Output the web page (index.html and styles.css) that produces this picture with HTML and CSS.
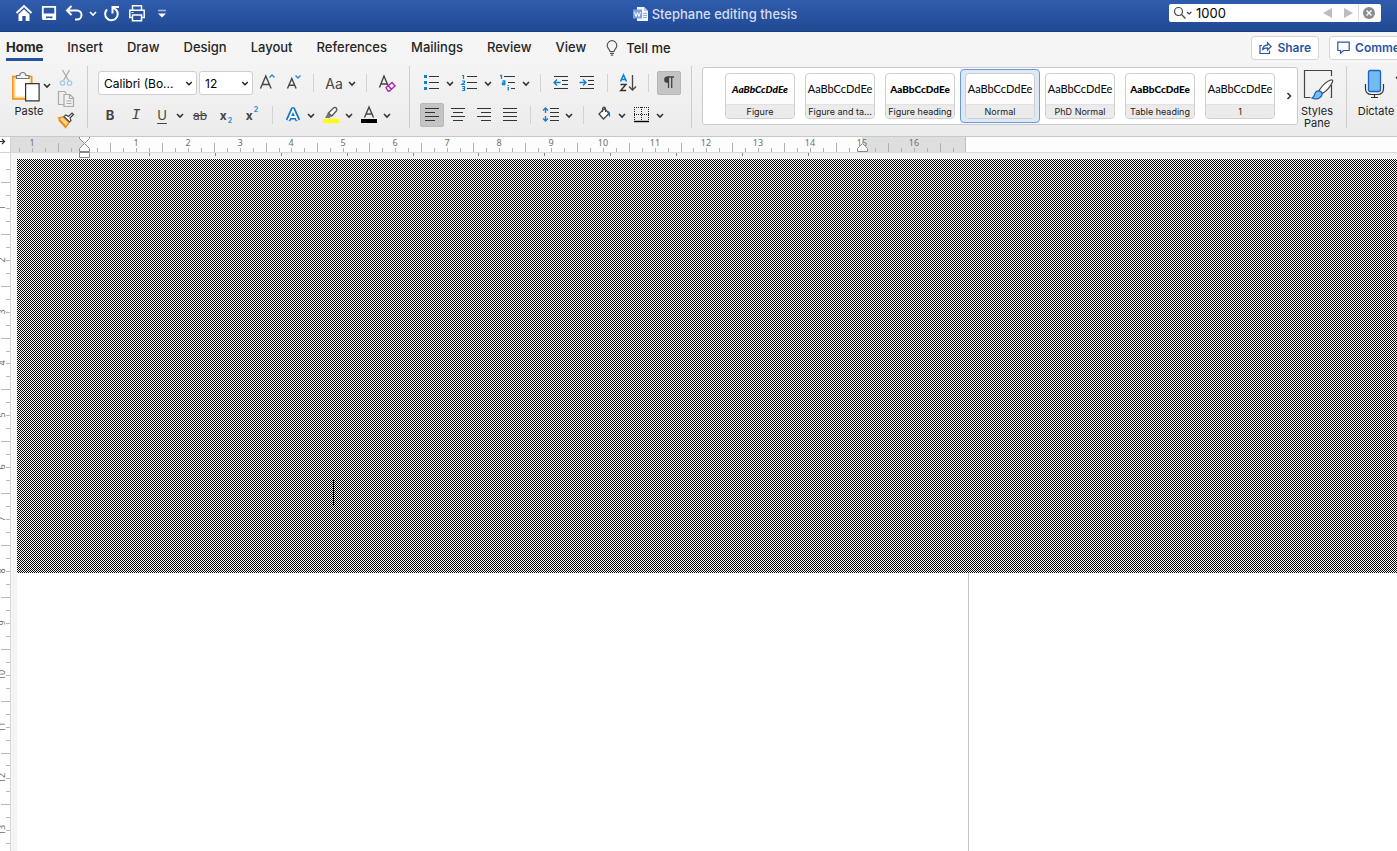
FILE: index.html
```html
<!DOCTYPE html>
<html lang="en">
<head>
<meta charset="utf-8">
<title>Stephane editing thesis</title>
<link rel="stylesheet" href="styles.css">
</head>
<body>
<svg class="defs" aria-hidden="true">
  <symbol id="chev" viewBox="0 0 12 24"><path d="M3 11l3 3 3-3" fill="none" stroke="currentColor" stroke-width="1.6"/></symbol>
</svg>
<div class="window">
  <header class="titlebar">
    <nav class="quick" aria-label="Quick access">
      <button aria-label="Home"><svg width="24" height="24"><path d="M4.500 12L12 5l7.500 7" fill="none" stroke="#fff" stroke-width="2"/><path d="M6.500 13.200L12 8.300l5.500 4.900V20h-3.800v-5h-3.400v5H6.500z" fill="#fff"/></svg></button>
      <button aria-label="Save"><svg width="24" height="24"><path d="M5.800 5.800h12.400v12.400H7.200l-1.400-1.400z" fill="none" stroke="#fff" stroke-width="1.800"/><path d="M5.500 12.500h13V19h-3v-3.500H9V19H5.500z" fill="#fff"/><path d="M11 17h2v2h-2z" fill="#fff"/></svg></button>
      <button aria-label="Undo"><svg width="24" height="24"><path d="M9.500 5L5 9.500l4.500 4.500M5.500 9.500H15a4.300 4.300 0 0 1 0 9h-2" fill="none" stroke="#fff" stroke-width="2"/></svg></button>
      <button class="narrow" aria-label="Undo history"><svg width="12" height="24"><use href="#chev"/></svg></button>
      <button aria-label="Repeat"><svg width="24" height="24"><path d="M7 8.500A6.300 6.300 0 1 0 16.300 9L13 6.500" fill="none" stroke="#fff" stroke-width="2"/><path d="M12.500 12.500V6h6.500" fill="none" stroke="#fff" stroke-width="2"/></svg></button>
      <button aria-label="Print"><svg width="24" height="24" fill="none" stroke="#fff" stroke-width="1.500"><path d="M7.500 9V4.800h9V9M7.500 16.500H4.800V9.200h14.400v7.300h-2.700M7.500 14h9v5.800h-9z"/><path d="M6.500 11.500h2" stroke-width="1"/></svg></button>
      <button aria-label="Customize toolbar"><svg width="24" height="24"><path d="M8 9.500h8" stroke="#a9bce0" stroke-width="1.500"/><path d="M8 12.500h8l-4 4z" fill="#fff"/></svg></button>
    </nav>
    <h1 class="doc-title">
      <svg width="16" height="16"><path d="M4 1h7l4 4v10H4z" fill="#f3f6fc"/><path d="M11 1l4 4h-4z" fill="#b6c8ea"/><path d="M10 7.500h4M10 9.500h4M10 11.500h4" stroke="#8faadd" /><path d="M0 3.500h9v9H0z" fill="#7d9fdf"/><path d="M1.500 6l1.500 4.500L4.500 6.500 6 10.500 7.500 6" fill="none" stroke="#fff"/></svg>
      Stephane editing thesis
    </h1>
    <div class="search-slot">
      <div class="search">
        <svg width="24" height="18"><circle cx="9.500" cy="7.500" r="4" fill="none" stroke="#444" stroke-width="1.200"/><path d="M12.500 10.500l4 4" stroke="#444" stroke-width="1.300"/><path d="M18 8l2.200 2 2.200-2" fill="none" stroke="#444" stroke-width="1.200"/></svg>
        <input type="text" value="1000" aria-label="Search in document">
        <button aria-label="Previous"><svg width="20" height="18"><path d="M14 4v10L5 9z" fill="#bdbdbd"/></svg></button>
        <button aria-label="Next"><svg width="20" height="18"><path d="M6 4v10l9-5z" fill="#bdbdbd"/></svg></button>
        <button class="clear" aria-label="Clear"><svg width="22" height="18"><circle cx="10" cy="9" r="6" fill="#8c8c8c"/><path d="M7.500 6.500l5 5m0-5l-5 5" stroke="#fff" stroke-width="1.400"/></svg></button>
      </div>
    </div>
  </header>

  <nav class="tabs" aria-label="Ribbon tabs">
    <a class="tab current" href="#home">Home</a>
    <a class="tab" href="#insert">Insert</a>
    <a class="tab" href="#draw">Draw</a>
    <a class="tab" href="#design">Design</a>
    <a class="tab" href="#layout">Layout</a>
    <a class="tab" href="#references">References</a>
    <a class="tab" href="#mailings">Mailings</a>
    <a class="tab" href="#review">Review</a>
    <a class="tab" href="#view">View</a>
    <button class="tell"><svg width="12" height="16" fill="none" stroke="#555" stroke-width="1.200"><path d="M4 11.500C4 9.500 1.200 8.500 1.200 5.500a4.800 4.800 0 0 1 9.600 0C10.800 8.500 8 9.500 8 11.500zM4 13.300h4M4.800 15.200h2.400"/></svg>Tell me</button>
    <div class="collab">
      <button class="pill"><svg width="13" height="13" fill="none" stroke="#2a55a5" stroke-width="1.200"><path d="M3 4.500H1v8h9.500V9.500M3.500 9c.4-3 2-4.800 5-4.800V1.800L12.200 5.500 8.500 9V6.800C6 6.800 4.500 7.500 3.500 9z"/></svg>Share</button>
      <button class="pill"><svg width="13" height="13" fill="none" stroke="#2a55a5" stroke-width="1.200"><path d="M.8 1.200h11.400v8.300H6.500L3.500 12.300V9.500H.8z"/></svg>Comments</button>
    </div>
  </nav>

  <section class="ribbon" aria-label="Home tools">
    <div class="group clipboard">
      <button class="paste">
        <svg width="44" height="34"><path d="M2.800 6.500h19v22.500h-19z" fill="#fbd98a" stroke="#f08c17" stroke-width="1.400"/><path d="M5.500 9h14v17.500h-14z" fill="#fff"/><path d="M6.500 8.500v-3h3.300a3 3 0 0 1 6 0h3.200v3z" fill="#f4f4f4" stroke="#777" stroke-width="1.200"/><path d="M15.600 13.600h13.500v17.200H15.600z" fill="#fff" stroke="#333" stroke-width="1.200"/><path d="M34 14l3 3 3-3" fill="none" stroke="#333" stroke-width="1.600"/></svg>
        <span>Paste</span>
      </button>
      <div class="clip-tools">
        <button aria-label="Cut"><svg width="20" height="18" fill="none"><path d="M6.500 1l6 10.500M13.500 1l-6 10.500" stroke="#aaa" stroke-width="1.200"/><circle cx="6.500" cy="14" r="2.200" stroke="#9fcdea" stroke-width="1.300"/><circle cx="13.500" cy="14" r="2.200" stroke="#9fcdea" stroke-width="1.300"/></svg></button>
        <button aria-label="Copy"><svg width="20" height="18" fill="none" stroke="#aaa" stroke-width="1.200"><path d="M8 14.500H2.500V1.500h6l2 2"/><path d="M8 4.500h6l3.500 3.500v8.500H8zM13.500 4.500V8.500h4M10.500 11h5M10.500 13.500h5"/></svg></button>
        <button aria-label="Format painter"><svg width="20" height="18"><path d="M2.500 7l4.500-1 6 5.500-3.500 5z" fill="#fbd98a" stroke="#f08c17" stroke-width="1.400"/><path d="M3 9l6 6" stroke="#f08c17" stroke-width="2"/><path d="M8 5.500l2-1.500 2.500 1.500L16 2l1.500 1.500L14 7l1 2.500-1.500 1.500z" fill="#fff" stroke="#444" stroke-width="1.200"/></svg></button>
      </div>
    </div>

    <div class="group rows">
      <div class="row">
        <label class="combo face"><select aria-label="Font"><option>Calibri (Bo...</option></select><svg width="12" height="22"><use href="#chev"/></svg></label>
        <label class="combo size"><select aria-label="Font size"><option>12</option></select><svg width="12" height="22"><use href="#chev"/></svg></label>
        <button class="tool" aria-label="Increase font size"><svg width="24" height="24" fill="none"><path d="M5.500 17.500L10.800 5l5.300 12.500M7.200 13.500h7.200" stroke="#444" stroke-width="1.400"/><path d="M14.500 6.500L17 4l2.500 2.500" stroke="#1e8fd6" stroke-width="1.400"/></svg></button>
        <button class="tool" aria-label="Decrease font size"><svg width="24" height="24" fill="none"><path d="M6.500 17.500L10.800 7.500l4.300 10M8 14.300h5.700" stroke="#444" stroke-width="1.400"/><path d="M14.500 4.500L17 7l2.500-2.500" stroke="#1e8fd6" stroke-width="1.400"/></svg></button>
        <i class="sep"></i>
        <button class="tool case" aria-label="Change case">Aa</button>
        <button class="drop" aria-label="Case options"><svg width="12" height="24"><use href="#chev"/></svg></button>
        <i class="sep"></i>
        <button class="tool" aria-label="Clear formatting"><svg width="24" height="24" fill="none"><path d="M4.500 16.500L9 5l4 9.500M6 13h6" stroke="#444" stroke-width="1.400"/><path d="M11 16.500l6-5 3 3.500-5.500 5h-1.500zM13.300 14.800l3 3.400" fill="#fff" stroke="#b01fb5" stroke-width="1.400"/></svg></button>
      </div>
      <div class="row">
        <button class="tool bold" aria-label="Bold">B</button>
        <button class="tool ital" aria-label="Italic">I</button>
        <button class="tool under" aria-label="Underline">U</button>
        <button class="drop after" aria-label="Underline options"><svg width="12" height="24"><use href="#chev"/></svg></button>
        <button class="tool strike" aria-label="Strikethrough">ab</button>
        <button class="tool script" aria-label="Subscript">x<sub>2</sub></button>
        <button class="tool script" aria-label="Superscript">x<sup>2</sup></button>
        <i class="sep"></i>
        <button class="tool" aria-label="Text effects"><svg width="24" height="24" fill="none"><path d="M7 17.500L12 6.500l5 11M9 14h6" stroke="#1372c8" stroke-width="4.800" stroke-linejoin="round"/><path d="M7.200 17.500L12 7l4.800 10.500M9 14h6" stroke="#fff" stroke-width="1.800"/></svg></button>
        <button class="drop" aria-label="Text effect options"><svg width="12" height="24"><use href="#chev"/></svg></button>
        <button class="tool" aria-label="Highlight"><svg width="24" height="24"><path d="M4 16h16v4H4z" fill="#ff0"/><path d="M6 15l3-5.500 3.500 3.500L10.500 15z" fill="#777"/><path d="M9.500 10l5-5c2-1.500 4.500.8 3 2.800l-4.700 5.200z" fill="#fff" stroke="#555" stroke-width="1.300"/></svg></button>
        <button class="drop" aria-label="Highlight colors"><svg width="12" height="24"><use href="#chev"/></svg></button>
        <button class="tool" aria-label="Font color"><svg width="24" height="24"><path d="M4 16h16v4H4z"/><path d="M7.500 14.500L12 4l4.500 10.500M9 11h6" fill="none" stroke="#444" stroke-width="1.400"/></svg></button>
        <button class="drop" aria-label="Font colors"><svg width="12" height="24"><use href="#chev"/></svg></button>
      </div>
    </div>

    <div class="group rows">
      <div class="row">
        <button class="tool" aria-label="Bullets"><svg width="24" height="24"><path d="M4 4h3v3H4zM4 10h3v3H4zM4 16h3v3H4z" fill="#1380cc"/><path d="M9 5.500h10M9 11.500h10M9 17.500h10" stroke="#333" stroke-width="1.200"/></svg></button>
        <button class="drop" aria-label="Bullet styles"><svg width="12" height="24"><use href="#chev"/></svg></button>
        <button class="tool" aria-label="Numbering"><svg width="24" height="24"><path d="M4 4.500h1.500V8M4 10h2.500v1.500L4 13.500h3M4 15.500h2.500v4H4m.5-2h2" fill="none" stroke="#1380cc" stroke-width="1.200"/><path d="M9 5.500h10M9 11.500h10M9 17.500h10" stroke="#333" stroke-width="1.200"/></svg></button>
        <button class="drop" aria-label="Numbering styles"><svg width="12" height="24"><use href="#chev"/></svg></button>
        <button class="tool" aria-label="Multilevel list"><svg width="24" height="24"><path d="M4 4.500h1.500V8M6.500 10h2.300v3.500H6.500v-1.700h2.300M12.200 16v3.500M12.200 14v1" fill="none" stroke="#1380cc" stroke-width="1.300"/><path d="M8 5.500h11M12 11.500h7M15 17.500h4" stroke="#333" stroke-width="1.200"/></svg></button>
        <button class="drop" aria-label="Multilevel styles"><svg width="12" height="24"><use href="#chev"/></svg></button>
        <i class="sep"></i>
        <button class="tool" aria-label="Decrease indent"><svg width="24" height="24" fill="none"><path d="M5 5.500h14M13 9.500h6M13 13.500h6M5 17.500h14" stroke="#333" stroke-width="1.200"/><path d="M8 8.500l-3 3 3 3M5 11.500h6.500" stroke="#1380cc" stroke-width="1.400"/></svg></button>
        <button class="tool" aria-label="Increase indent"><svg width="24" height="24" fill="none"><path d="M5 5.500h14M13 9.500h6M13 13.500h6M5 17.500h14" stroke="#333" stroke-width="1.200"/><path d="M8 8.500l3 3-3 3M11 11.500H4.500" stroke="#1380cc" stroke-width="1.400"/></svg></button>
        <i class="sep"></i>
        <button class="tool" aria-label="Sort"><svg width="24" height="24" fill="none"><path d="M4.500 10.500L7.500 4l3 6.500M5.500 8.500h4" stroke="#1380cc" stroke-width="1.600"/><path d="M4.500 13.500H10l-5.300 6h5.500" stroke="#333" stroke-width="1.400"/><path d="M16.500 4v15M13 15.500l3.500 3.500 3.500-3.500" stroke="#444" stroke-width="1.300"/></svg></button>
        <i class="sep"></i>
        <button class="tool on" aria-label="Show paragraph marks" aria-pressed="true"><svg width="24" height="24"><path d="M11.500 6v11M14.700 6v11M10 6h7" stroke="#444" stroke-width="1.300"/><path d="M11.500 5.500v6.300h-1.200a3.150 3.150 0 0 1 0-6.300z" fill="#444"/></svg></button>
      </div>
      <div class="row">
        <button class="tool on" aria-label="Align left" aria-pressed="true"><svg width="24" height="24" stroke="#333" stroke-width="1.200"><path d="M5 5.500h14M5 9.500h10M5 13.500h14M5 17.500h10"/></svg></button>
        <button class="tool" aria-label="Center"><svg width="24" height="24" stroke="#333" stroke-width="1.200"><path d="M5 5.500h14M7 9.500h10M5 13.500h14M7 17.500h10"/></svg></button>
        <button class="tool" aria-label="Align right"><svg width="24" height="24" stroke="#333" stroke-width="1.200"><path d="M5 5.500h14M9 9.500h10M5 13.500h14M9 17.500h10"/></svg></button>
        <button class="tool" aria-label="Justify"><svg width="24" height="24" stroke="#333" stroke-width="1.200"><path d="M5 5.500h14M5 9.500h14M5 13.500h14M5 17.500h14"/></svg></button>
        <i class="sep"></i>
        <button class="tool" aria-label="Line spacing"><svg width="24" height="24" fill="none"><path d="M11 5.500h9M11 9.500h9M11 13.500h9M11 17.500h9" stroke="#333" stroke-width="1.200"/><path d="M6.500 5v5M4 7.500L6.500 5 9 7.500M6.500 13v5M4 15.500L6.500 18 9 15.500" stroke="#1380cc" stroke-width="1.400"/></svg></button>
        <button class="drop" aria-label="Spacing options"><svg width="12" height="24"><use href="#chev"/></svg></button>
        <i class="sep"></i>
        <button class="tool" aria-label="Shading"><svg width="24" height="24"><path d="M7 11l5.500-5.500 4.500 5-5.500 5.500z" fill="#fff" stroke="#444" stroke-width="1.300"/><path d="M10.500 9V6c0-2.500 3-2.500 3 0v3" fill="none" stroke="#444" stroke-width="1.100"/><path d="M15 8c2.500 0 3.500 1.500 3 6-1.500-.5-1.500-3-3-6z" fill="#1d5fae"/></svg></button>
        <button class="drop after" aria-label="Shading colors"><svg width="12" height="24"><use href="#chev"/></svg></button>
        <button class="tool" aria-label="Borders"><svg width="24" height="24" fill="none"><path d="M4.500 4v15M11.500 4v15M18.500 4v15M4 4.500h15M4 11.500h15" stroke="#222" stroke-dasharray="1 1"/><path d="M4 18.500h15" stroke="#000" stroke-width="1.400"/></svg></button>
        <button class="drop" aria-label="Border options"><svg width="12" height="24"><use href="#chev"/></svg></button>
      </div>
    </div>

    <div class="group styles">
      <div class="gallery">
        <button class="style"><span class="card"><b class="sample bi">AaBbCcDdEe</b><span class="name">Figure</span></span></button>
        <button class="style"><span class="card"><span class="sample">AaBbCcDdEe</span><span class="name">Figure and ta...</span></span></button>
        <button class="style"><span class="card"><b class="sample">AaBbCcDdEe</b><span class="name">Figure heading</span></span></button>
        <button class="style picked"><span class="card"><span class="sample">AaBbCcDdEe</span><span class="name">Normal</span></span></button>
        <button class="style"><span class="card"><span class="sample">AaBbCcDdEe</span><span class="name">PhD Normal</span></span></button>
        <button class="style"><span class="card"><b class="sample">AaBbCcDdEe</b><span class="name">Table heading</span></span></button>
        <button class="style"><span class="card"><span class="sample">AaBbCcDdEe</span><span class="name">1</span></span></button>
        <button class="more" aria-label="More styles"><svg width="16" height="16"><path d="M6.500 5l3 3-3 3" fill="none" stroke="#333" stroke-width="1.500"/></svg></button>
      </div>
      <button class="big">
        <svg width="34" height="34"><path d="M31.500 10V4.500h-27v27h6M30.500 31.500h1V19" fill="none" stroke="#444" stroke-width="1.200"/><path d="M19 24.500c3-4.500 8-9.500 12-10.500 1.500-.3 2 .8 1.500 2-2 4.500-5.500 8.500-10 11.500z" fill="#fff" stroke="#444" stroke-width="1.200"/><path d="M12 32c2-1 2.500-2.500 3-4.500 1-3.500 6-3.500 7 0 .5 4-5.500 7-10 4.500z" fill="#7cbcf0" stroke="#1467b8" stroke-width="1.200"/></svg>
        <span>Styles Pane</span>
      </button>
    </div>

    <div class="group voice">
      <button class="big">
        <svg width="34" height="34"><rect x="9.500" y="4.500" width="12" height="21" rx="1.500" fill="#74b9f0" stroke="#1467b8" stroke-width="1.300"/><path d="M6.500 18v4.500q0 6 6 6h6q6 0 6-6V18M15.500 28.500v3M12 31.500h7" fill="none" stroke="#333" stroke-width="1.200"/></svg>
        <span>Dictate</span>
      </button>
      <button class="drop" aria-label="Dictate options"><svg width="12" height="24"><use href="#chev"/></svg></button>
    </div>
  </section>

  <main class="workspace">
    <div class="corner"><svg width="10" height="15"><path d="M0 4.500h4M2 2l2.500 2.500L2 7" fill="none" stroke="#333" stroke-width="1.200"/></svg></div>
    <svg class="ruler-h" id="rulerH" aria-hidden="true"></svg>
    <svg class="ruler-v" id="rulerV" aria-hidden="true"></svg>
    <div class="canvas">
      <div class="selection"></div>
      <div class="page"></div>
    </div>
  </main>
</div>
<script src="ruler.js"></script>
</body>
</html>
```
FILE: styles.css
```css
* { box-sizing: border-box; }
body {
  margin: 0;
  overflow: hidden;
  font-family: Inter, "Liberation Sans", sans-serif;
  font-size: 13px;
  color: #222;
}
button {
  display: flex;
  align-items: center;
  justify-content: center;
  margin: 0;
  padding: 0;
  border: 0;
  background: none;
  color: inherit;
  font: inherit;
}
svg { display: block; flex: none; }
.defs { position: absolute; width: 0; height: 0; }
.window {
  display: flex;
  flex-direction: column;
  min-width: 1430px;
  height: 100vh;
  background: #fff;
}

/* Title bar */
.titlebar {
  display: grid;
  grid-template-columns: 1fr auto 1fr;
  height: 32px;
  flex: none;
  background: linear-gradient(#2f5cad, #214a94);
  border-bottom: 1px solid #1a3f80;
  color: #fff;
}
.quick { display: flex; gap: 1px; padding: 1px 12px; }
.quick button { width: 24px; height: 24px; }
.quick .narrow { width: 12px; }
.doc-title {
  display: flex;
  align-items: center;
  gap: 3px;
  margin: 0;
  height: 27px;
  font-size: 13px;
  font-weight: 500;
  color: #d5def0;
}
.search-slot { display: flex; justify-content: flex-end; padding: 4px 49px 0 0; }
.search {
  display: flex;
  width: 212px;
  height: 18px;
  background: #fff;
  border-radius: 2px;
}
.search input {
  flex: 1;
  min-width: 0;
  padding: 0 0 0 3px;
  border: 0;
  outline: 0;
  background: none;
  font: inherit;
  color: #000;
}
.search .clear { width: 23px; border-left: 1px solid #ddd; }

/* Tabs */
.tabs {
  display: flex;
  align-items: center;
  height: 31px;
  flex: none;
  padding: 0 4px 0 6px;
  background: #f5f5f5;
  font-weight: 500;
}
.tab {
  margin-right: 24px;
  padding: 4px 0 2px;
  border-bottom: 3px solid transparent;
  line-height: 18px;
  color: #262626;
  text-decoration: none;
}
.current { border-color: #2553a0; font-weight: 700; }
.tell { gap: 8px; margin-left: -4px; }
.collab { display: flex; gap: 10px; margin-left: auto; }
.pill {
  gap: 5px;
  height: 24px;
  padding: 0 7px;
  border: 1px solid #d6d6d6;
  border-radius: 3px;
  background: #fff;
  color: #2a55a5;
  font-size: 12px;
  font-weight: 600;
}

/* Ribbon */
.ribbon {
  display: flex;
  flex: none;
  height: 74px;
  padding: 3px 0 8px;
  background: linear-gradient(#f4f4f4, #ececec);
  border-bottom: 1px solid #c8c8c8;
}
.group { display: flex; padding: 0 10px; border-left: 1px solid #cdcdcd; }
.clipboard { width: 87px; padding: 5px 0 0 10px; border: 0; }
.paste { flex-direction: column; width: 44px; height: 46px; font-size: 11px; }
.paste span { width: 38px; margin-right: 6px; line-height: 14px; }
.clip-tools { display: flex; flex-direction: column; gap: 3px; margin: -2px 0 0 2px; }
.rows { flex-direction: column; gap: 8px; padding-top: 5px; }
.row { display: flex; align-items: center; gap: 2px; height: 24px; }
.tool { width: 24px; height: 24px; color: #444; font-size: 15px; }
.on { background: #c4c4c4; border: 1px solid #b8b8b8; border-radius: 2px; }
.drop { width: 12px; height: 24px; margin-left: -2px; color: #333; }
.sep { width: 1px; height: 18px; margin: 0 6px; background: #d2d2d2; }
.combo {
  display: flex;
  align-items: center;
  height: 24px;
  padding-right: 1px;
  background: #fff;
  border: 1px solid #cfcfcf;
  border-radius: 3px;
}
.combo select {
  flex: 1;
  min-width: 0;
  padding: 0 0 0 5px;
  border: 0;
  background: none;
  appearance: none;
  font: inherit;
  font-size: 12px;
  color: #000;
}
.face { width: 99px; }
.size { width: 54px; }
.case { font-size: 14px; }
.bold { font-size: 13px; font-weight: 700; }
.ital { font-family: "Liberation Mono", monospace; font-style: italic; font-size: 15px; }
.under { font-size: 13px; text-decoration: underline; text-underline-offset: 3px; }
.strike { font-size: 12px; text-decoration: line-through; }
.script { gap: 1px; font-size: 12px; font-weight: 700; }
.script sub, .script sup { color: #1e8fd6; font-size: 7px; line-height: 8px; }
.script sub { align-self: flex-end; margin-bottom: 2px; }
.script sup { align-self: flex-start; margin-top: 3px; }

/* Style gallery */
.styles { padding-right: 0; }
.gallery {
  display: flex;
  align-items: center;
  height: 58px;
  margin-top: 1px;
  padding-left: 17px;
  background: #fff;
  border: 1px solid #cbcbcb;
  border-radius: 3px;
}
.style {
  width: 80px;
  height: 54px;
  border: 1px solid transparent;
  border-radius: 4px;
}
.picked { background: #dfe8f6; border-color: #6f97d6; }
.card {
  display: flex;
  flex-direction: column;
  width: 70px;
  height: 46px;
  overflow: hidden;
  border: 1px solid #cfcfcf;
  border-radius: 4px;
  background: linear-gradient(#fff, #fafafa);
}
.sample {
  font-family: Lato, "Open Sans", sans-serif;
  font-size: 11px;
  line-height: 30px;
  color: #000;
}
b.sample { font-weight: 900; font-size: 10px; }
.bi { font-style: italic; }
.name {
  flex: 1;
  background: #ebebeb;
  border-top: 1px solid #e2e2e2;
  font-size: 9px;
  line-height: 13px;
  white-space: nowrap;
}
.more { width: 17px; height: 24px; }
.big {
  flex-direction: column;
  justify-content: flex-start;
  width: 38px;
  font-size: 11px;
  line-height: 12px;
}
.big svg { margin-bottom: 3px; }
.styles .big { margin-right: 10px; }
.big span { margin-top: 2px; }

/* Rulers and document */
.workspace {
  display: grid;
  grid-template: 16px minmax(0, 1fr) / 11px minmax(0, 1fr);
  flex: 1;
  min-height: 0;
}
.corner { border-right: 1px solid #d2d2d2; border-bottom: 1px solid #d2d2d2; }
.ruler-h {
  z-index: 1;
  width: 100%;
  height: 22px;
  background: #f4f4f4;
}
.ruler-v { width: 11px; height: 100%; }
.ruler-h text, .ruler-v text {
  font-family: "Noto Sans", sans-serif;
  font-size: 9px;
  text-anchor: middle;
  fill: #6e6e6e;
}
.canvas {
  display: flex;
  flex-direction: column;
  padding: 6px 0 0 6px;
  background: linear-gradient(to right, #f4f4f4 6px, #fff 6px);
}
.selection {
  position: relative;
  flex: none;
  height: 414px;
  background: repeating-conic-gradient(#fff 0 25%, #000 0 50%) 0 0 / 2px 2px;
}
.selection::after {
  content: "";
  position: absolute;
  left: 316px;
  top: 321px;
  width: 1px;
  height: 26px;
  background: #000;
}
.page { flex: 1; width: 952px; border-right: 1px solid #c4c4c4; }
```
FILE: ruler.js
```js
const NS = "http://www.w3.org/2000/svg";
const CM = 51.87;

function add(svg, tag, attrs, text) {
  const el = document.createElementNS(NS, tag);
  for (const key in attrs) el.setAttribute(key, attrs[key]);
  if (text !== undefined) el.textContent = text;
  svg.appendChild(el);
}

const h = document.getElementById("rulerH");
const zero = 73;
add(h, "rect", { x: 0, y: 0, width: "100%", height: 15, fill: "#fdfdfd" });
add(h, "rect", { x: 0, y: 0, width: zero, height: 15, fill: "#dedede" });
add(h, "rect", { x: 851, y: 0, width: 104, height: 15, fill: "#dedede" });
add(h, "rect", { x: 954, y: 0, width: 1, height: 15, fill: "#c0c0c0" });
add(h, "rect", { x: 0, y: 15, width: "100%", height: 1, fill: "#d6d6d6" });
for (let q = -5; q <= 67; q++) {
  if (q === 0 || q === 60) continue;
  const x = Math.round(zero + q * CM / 4);
  const half = Math.abs(q % 4) === 2;
  const top = half ? 6 : 11;
  add(h, "rect", { x, y: top, width: 1, height: 15 - top, fill: "#b0b0b0" });
}
for (let n = -1; n <= 16; n++) {
  if (n !== 0) add(h, "text", { x: Math.round(zero + n * CM), y: 9 }, Math.abs(n));
}
for (let i = 1; i <= 11; i++) {
  add(h, "rect", { x: Math.round(72 + i * 65.9), y: 16, width: 1, height: 3, fill: "#888" });
}
const marker = { fill: "#fff", stroke: "#888", "stroke-width": 1 };
add(h, "path", { d: "M68.500 0v1.500l5 5 5-5V0M68.500 14.500v-3l5-5 5 5v3zM68.500 15.500h10v5h-10z", ...marker });
add(h, "path", { d: "M846.500 14.500v-3l5-5 5 5v3z", ...marker });

const v = document.getElementById("rulerV");
add(v, "rect", { x: 10, y: 0, width: 1, height: "100%", fill: "#d6d6d6" });
const cells = Math.ceil(window.innerHeight / CM);
for (let q = 1; q <= cells * 4; q++) {
  const y = Math.round(3 + q * CM / 4);
  const left = q % 4 === 2 ? 1 : 6;
  add(v, "rect", { x: left, y, width: 10 - left, height: 1, fill: "#b8b8b8" });
}
for (let n = 1; n <= cells; n++) {
  const y = Math.round(3 + n * CM);
  add(v, "text", { x: 0, y: 0, transform: `translate(5 ${y}) rotate(-90)` }, n);
}
```
